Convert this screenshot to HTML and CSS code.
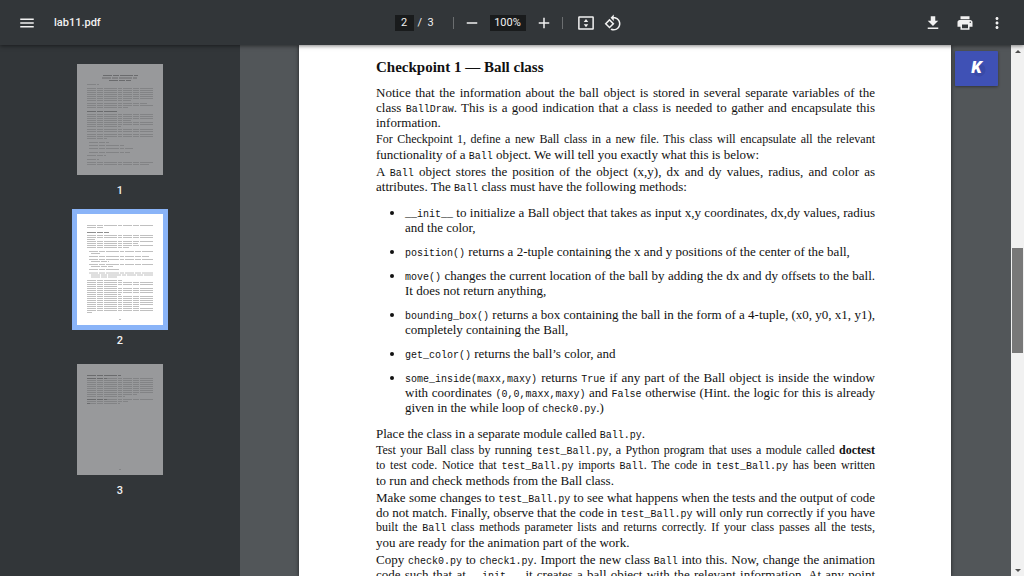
FILE: index.html
```html
<!DOCTYPE html>
<html lang="en">
<head>
    <meta charset="UTF-8">
    <meta name="viewport" content="width=device-width, initial-scale=1.0">
    <title>lab11.pdf</title>
    <link rel="stylesheet" href="styles.css">
</head>
<body>
    <!-- Toolbar -->
    <header class="toolbar">
        <div class="toolbar-start">
            <button class="icon-btn" type="button" aria-label="Menu">
                <svg viewBox="0 0 24 24"><path d="M3 18h18v-2H3v2zm0-5h18v-2H3v2zm0-7v2h18V6H3z"/></svg>
            </button>
            <h1 class="file-name">lab11.pdf</h1>
        </div>
        <div class="toolbar-center">
            <input class="field page-field" type="text" value="2" aria-label="Page number">
            <span class="page-count">/&nbsp; 3</span>
            <span class="separator"></span>
            <button class="icon-btn" type="button" aria-label="Zoom out">
                <svg viewBox="0 0 24 24"><path d="M5 11h14v2H5z"/></svg>
            </button>
            <input class="field zoom-field" type="text" value="100%" aria-label="Zoom level">
            <button class="icon-btn" type="button" aria-label="Zoom in">
                <svg viewBox="0 0 24 24"><path d="M19 13h-6v6h-2v-6H5v-2h6V5h2v6h6v2z"/></svg>
            </button>
            <span class="separator"></span>
            <button class="icon-btn fit-btn" type="button" aria-label="Fit to page">
                <svg viewBox="0 0 24 24"><path d="M3 3h18c1 0 1.500 1 1.500 1.500v15c0 1-1 1.500-1.500 1.500H3c-1 0-1.500-1-1.500-1.500v-15C1.500 3.500 2.500 3 3 3zm.500 2v14h17V5h-17zM12 6.500l3 4H9zM12 17.500l-3-4h6z"/></svg>
            </button>
            <button class="icon-btn" type="button" aria-label="Rotate">
                <svg viewBox="0 0 24 24"><path d="M7.340 6.410L.860 12.900l6.490 6.480 6.490-6.480-6.500-6.490zM3.690 12.900l3.660-3.660L11 12.900l-3.660 3.660-3.650-3.660zm15.670-6.260C17.610 4.880 15.300 4 13 4V.760L8.760 5 13 9.240V6c1.790 0 3.580.680 4.950 2.050 2.730 2.730 2.730 7.170 0 9.900C16.580 19.320 14.790 20 13 20c-.970 0-1.940-.210-2.840-.610l-1.490 1.490C10.020 21.620 11.510 22 13 22c2.300 0 4.610-.880 6.360-2.640 3.520-3.510 3.520-9.210 0-12.720z"/></svg>
            </button>
        </div>
        <div class="toolbar-end">
            <button class="icon-btn" type="button" aria-label="Download">
                <svg viewBox="0 0 24 24"><path d="M19 9h-4V3H9v6H5l7 7 7-7zM5 18v2h14v-2H5z"/></svg>
            </button>
            <button class="icon-btn" type="button" aria-label="Print">
                <svg viewBox="0 0 24 24"><path d="M19 8H5c-1.660 0-3 1.340-3 3v6h4v4h12v-4h4v-6c0-1.660-1.340-3-3-3zm-3 11H8v-5h8v5zm3-7c-.550 0-1-.450-1-1s.450-1 1-1 1 .450 1 1-.450 1-1 1zm-1-9H6v4h12V3z"/></svg>
            </button>
            <button class="icon-btn" type="button" aria-label="More">
                <svg viewBox="0 0 24 24"><path d="M12 8c1.100 0 2-.900 2-2s-.900-2-2-2-2 .900-2 2 .900 2 2 2zm0 2c-1.100 0-2 .900-2 2s.900 2 2 2 2-.900 2-2-.900-2-2-2zm0 6c-1.100 0-2 .900-2 2s.900 2 2 2 2-.900 2-2-.900-2-2-2z"/></svg>
            </button>
        </div>
    </header>

    <div class="content">
        <!-- Thumbnails -->
        <nav class="sidebar">
            <a class="thumb" href="#page1">
                <svg class="thumb-page" viewBox="0 0 86 111">
                    <path class="head" d="M26 11.500h36M25 14h36M32 16.500h22M10 47.500h31"/>
                    <path class="text" d="M10 20.500h12M10 24.500h66M10 26.500h66M10 28.500h66M10 30.500h66M10 32.500h66M10 34.500h66M10 36.500h44M10 39.500h60M10 41.500h66M10 43.500h41M10 50.500h66M10 52.500h66M10 54.500h66M10 56.500h44M10 58.500h66M10 60.500h66M10 62.500h34M10 65.500h66M10 67.500h66M10 70.500h66M10 72.500h66M10 74.500h20M12 78.500h20M12 81.500h36M12 84.500h44M12 88.500h41M10 91.500h19M10 95.500h12M10 98.500h66M10 100.500h62"/>
                </svg>
                <span class="thumb-label">1</span>
            </a>
            <a class="thumb active" href="#page2">
                <svg class="thumb-page" viewBox="0 0 86 111">
                    <path class="head" d="M10 18.500h22"/>
                    <path class="text" d="M10 11.500h66M10 13.500h17M10 21.500h66M10 23.500h66M10 25.500h8M10 27.500h66M10 29.500h51M10 31.500h66M10 33.500h42M12 37.500h64M14 39.500h9M12 42.500h60M12 45.500h64M14 47.500h18M12 50.500h64M14 52.500h22M12 55.500h30M12 59h64M14 61h62M14 63h26M10 66.500h35M10 68.500h66M10 70.500h66M10 72.500h31M10 74.500h66M10 76.500h66M10 78.500h66M10 80.500h34M10 82.500h66M10 84.500h66M10 86.500h66M10 88.500h66M10 90.500h66M10 92.500h53M10 94.500h66M10 96.500h66M10 98.500h5M42 105.500h2"/>
                </svg>
                <span class="thumb-label">2</span>
            </a>
            <a class="thumb" href="#page3">
                <svg class="thumb-page" viewBox="0 0 86 111">
                    <path class="head" d="M10 11.500h34"/>
                    <path class="text" d="M10 14.500h66M10 16.500h66M10 18.500h66M10 20.500h66M10 22.500h66M10 24.500h66M10 26.500h66M10 28.500h66M10 30.500h50M10 32.500h38M10 35.500h66M10 37.500h41M10 39.500h33M42 105.500h2"/>
                    <path class="head" d="M10 14.500h20M10 35.500h20M10 39.500h3"/>
                </svg>
                <span class="thumb-label">3</span>
            </a>
        </nav>

        <!-- Document -->
        <main class="viewer">
            <article class="page" id="page2">
                <h2>Checkpoint 1 — Ball class</h2>
                <p>
                    <span class="line">Notice that the information about the ball object is stored in several separate variables of the</span>
                    <span class="line">class <code>BallDraw</code>. This is a good indication that a class is needed to gather and encapsulate this</span>
                    information.
                </p>
                <p>
                    <span class="line tight">For Checkpoint 1, define a new Ball class in a new file. This class will encapsulate all the relevant</span>
                    functionality of a <code>Ball</code> object. We will tell you exactly what this is below:
                </p>
                <p>
                    <span class="line">A <code>Ball</code> object stores the position of the object (x,y), dx and dy values, radius, and color as</span>
                    attributes. The <code>Ball</code> class must have the following methods:
                </p>
                <ul>
                    <li>
                        <span class="line"><code>__init__</code> to initialize a Ball object that takes as input x,y coordinates, dx,dy values, radius</span>
                        and the color,
                    </li>
                    <li><code>position()</code> returns a 2-tuple containing the x and y positions of the center of the ball,</li>
                    <li>
                        <span class="line"><code>move()</code> changes the current location of the ball by adding the dx and dy offsets to the ball.</span>
                        It does not return anything,
                    </li>
                    <li>
                        <span class="line"><code>bounding_box()</code> returns a box containing the ball in the form of a 4-tuple, (x0, y0, x1, y1),</span>
                        completely containing the Ball,
                    </li>
                    <li><code>get_color()</code> returns the ball’s color, and</li>
                    <li>
                        <span class="line"><code>some_inside(maxx,maxy)</code> returns <code>True</code> if any part of the Ball object is inside the window</span>
                        <span class="line">with coordinates <code>(0,0,maxx,maxy)</code> and <code>False</code> otherwise (Hint. the logic for this is already</span>
                        given in the while loop of <code>check0.py</code>.)
                    </li>
                </ul>
                <p>Place the class in a separate module called <code>Ball.py</code>.</p>
                <p>
                    <span class="line tight">Test your Ball class by running <code>test_Ball.py</code>, a Python program that uses a module called <b>doctest</b></span>
                    <span class="line tight">to test code. Notice that <code>test_Ball.py</code> imports <code>Ball</code>. The code in <code>test_Ball.py</code> has been written</span>
                    to run and check methods from the Ball class.
                </p>
                <p>
                    <span class="line">Make some changes to <code>test_Ball.py</code> to see what happens when the tests and the output of code</span>
                    <span class="line">do not match. Finally, observe that the code in <code>test_Ball.py</code> will only run correctly if you have</span>
                    <span class="line tight">built the <code>Ball</code> class methods parameter lists and returns correctly. If your class passes all the tests,</span>
                    you are ready for the animation part of the work.
                </p>
                <p>
                    <span class="line">Copy <code>check0.py</code> to <code>check1.py</code>. Import the new class <code>Ball</code> into this. Now, change the animation</span>
                    <span class="line">code such that at <code>__init__</code>, it creates a ball object with the relevant information. At any point</span>
                </p>
            </article>
            <button class="ext-btn" type="button">K</button>
        </main>

        <div class="scrollbar">
            <span class="arrow arrow-up"></span>
            <span class="track"><span class="scroll-thumb"></span></span>
            <span class="arrow arrow-down"></span>
        </div>
    </div>
</body>
</html>
```
FILE: styles.css
```css
* {
    margin: 0;
    padding: 0;
    box-sizing: border-box;
}

body {
    height: 100vh;
    display: flex;
    flex-direction: column;
    background: #525659;
    font-family: Roboto, sans-serif;
    overflow: hidden;
}

/* Toolbar */
.toolbar {
    display: grid;
    grid-template-columns: 1fr auto 1fr;
    align-items: center;
    height: 45px;
    flex-shrink: 0;
    padding: 0 18px;
    background: #323639;
    color: #f1f1f1;
    box-shadow: 0 1px 4px rgba(0, 0, 0, 0.5);
    position: relative;
    z-index: 1;
}

.toolbar-start,
.toolbar-center,
.toolbar-end {
    display: flex;
    align-items: center;
}

.toolbar-start {
    gap: 18px;
}

.toolbar-center {
    gap: 9px;
    padding-right: 8px;
}

.toolbar-end {
    gap: 14px;
    justify-content: flex-end;
}

.file-name {
    font-size: 11px;
    font-weight: 500;
}

.icon-btn {
    width: 18px;
    height: 18px;
    background: transparent;
    border: none;
    cursor: pointer;
}

.icon-btn svg {
    display: block;
    width: 18px;
    height: 18px;
    fill: #f1f1f1;
}

.fit-btn {
    margin-left: 5px;
}

.field {
    height: 16px;
    background: #191b1c;
    border: none;
    color: #f1f1f1;
    font-family: inherit;
    font-size: 11px;
    text-align: center;
    outline: none;
}

.page-field {
    width: 19px;
}

.zoom-field {
    width: 36px;
}

.page-count {
    width: 21px;
    margin: 0 5px 0 -5px;
    font-size: 11px;
    white-space: nowrap;
}

.separator {
    width: 1px;
    height: 12px;
    background: #6b6e70;
}

.content {
    display: flex;
    flex: 1;
    min-height: 0;
}

/* Thumbnails */
.sidebar {
    display: flex;
    flex-direction: column;
    align-items: center;
    gap: 15px;
    width: 240px;
    flex-shrink: 0;
    padding-top: 19px;
    background: #323639;
}

.thumb {
    display: flex;
    flex-direction: column;
    align-items: center;
    gap: 8px;
    color: #f1f1f1;
    text-decoration: none;
}

.thumb-page {
    width: 86px;
    height: 111px;
    background: #98999b;
}

.thumb-page path {
    fill: none;
    stroke: #828385;
    stroke-dasharray: 9 1 6 1 13 1 4 1;
}

.thumb-page .head {
    stroke: #6a6b6d;
}

.active .thumb-page {
    background: #fff;
    outline: 5px solid #8ab4f8;
}

.active .thumb-page .text {
    stroke: #c0c0c0;
}

.active .thumb-page .head {
    stroke: #8f8f8f;
}

.thumb-label {
    font-size: 11px;
    font-weight: 500;
    line-height: 16px;
}

/* Document */
.viewer {
    display: flex;
    justify-content: center;
    flex: 1;
    min-width: 0;
    padding-right: 1px;
    position: relative;
}

.page {
    width: 100%;
    max-width: 652px;
    padding: 14px 76px 0 77px;
    background: #fff;
    color: #111;
    font-family: "Liberation Serif", serif;
    font-size: 13px;
    line-height: 15px;
    box-shadow: 0 0 4px rgba(0, 0, 0, 0.6);
}

.page h2 {
    margin-bottom: 10px;
    font-size: 15px;
    line-height: 16px;
}

.page p {
    margin-bottom: 2px;
}

.page ul {
    margin: 11px 0;
    padding-left: 29px;
}

.page li {
    margin-bottom: 9px;
}

.page code {
    font-family: "Liberation Mono", monospace;
    font-size: 10px;
    line-height: 1;
}

/* Lines set to the full measure */
.line {
    display: block;
    text-align: justify;
    text-align-last: justify;
    white-space: nowrap;
}

.tight {
    font-size: 12px;
}

.ext-btn {
    position: absolute;
    top: 6px;
    right: 13px;
    width: 43px;
    height: 35px;
    background: radial-gradient(circle at 24px 19px, #394aa8 6px, #3f51b5 7px);
    border: none;
    border-radius: 1px;
    color: #fff;
    font-family: Roboto, sans-serif;
    font-size: 17px;
    font-style: italic;
    font-weight: 900;
    line-height: 30px;
    padding-bottom: 4px;
    box-shadow: 0 1px 3px rgba(0, 0, 0, 0.4);
    cursor: pointer;
}

/* Scrollbar */
.scrollbar {
    display: flex;
    flex-direction: column;
    align-items: center;
    width: 13px;
    flex-shrink: 0;
    padding: 5px 0 4px;
    background: #f1f1f1;
}

.arrow {
    border: 3px solid transparent;
}

.arrow-up {
    border-top: none;
    border-bottom-color: #505050;
}

.arrow-down {
    border-bottom: none;
    border-top-color: #505050;
}

.track {
    flex: 1;
    width: 11px;
    padding-top: 195px;
}

.scroll-thumb {
    display: block;
    height: 105px;
    background: #787878;
}
```
